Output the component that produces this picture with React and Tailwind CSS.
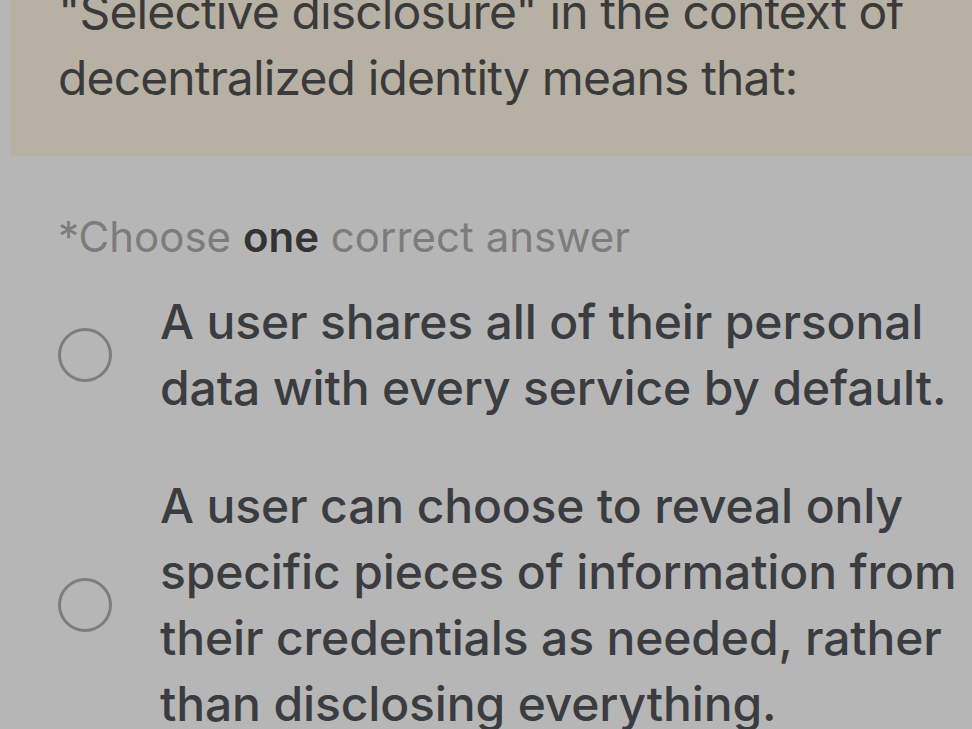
export default function App() {
  const font = { fontFamily: 'Inter, "Noto Sans", sans-serif' };
  return (
    <div className="min-h-screen w-full bg-[#b6b6b6] overflow-hidden" style={font}>
      <div className="ml-[10px] bg-[#b6b1a4] pl-[48px] pr-2 pb-[45px] -mt-[21px]">
        <p className="text-[48px] leading-[66px] font-normal text-[#3a3a3a] tracking-[-0.018em]">
          "Selective disclosure" in the context of decentralized identity means that:
        </p>
      </div>
      <div className="pl-[58px] pr-1">
        <p className="mt-[56px] text-[42px] leading-[50px] text-[#7c7c7c]">
          *Choose <span className="font-semibold text-[#333333]">one</span> correct answer
        </p>
        <div className="mt-[27px] flex flex-col gap-[52px]">
          <Option lines="A user shares all of their personal data with every service by default." />
          <Option lines="A user can choose to reveal only specific pieces of information from their credentials as needed, rather than disclosing everything." />
        </div>
      </div>
    </div>
  );
}

function Option({ lines }) {
  return (
    <div className="flex items-center">
      <div className="w-[54px] h-[54px] shrink-0 rounded-full border-[3px] border-[#7d7d7d]" />
      <p className="ml-[48px] text-[48px] leading-[66px] font-medium text-[#3a3c40] tracking-[-0.003em]">
        {lines}
      </p>
    </div>
  );
}
